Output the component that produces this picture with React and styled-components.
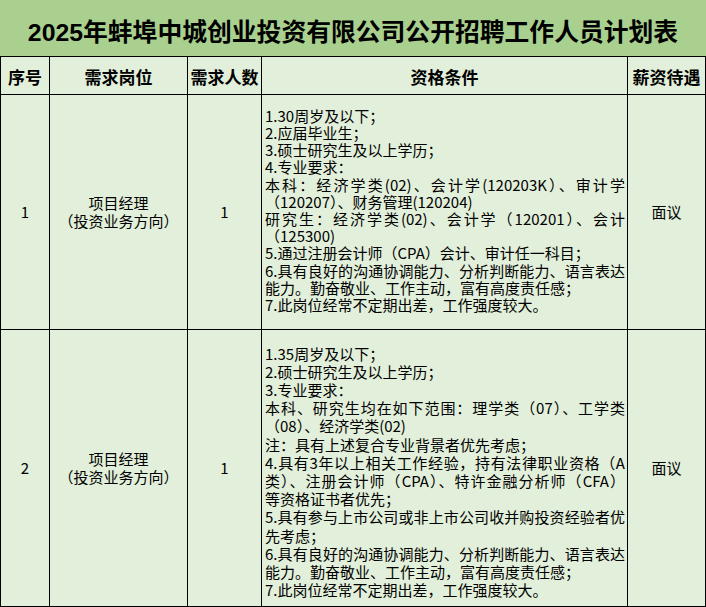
import React from "react";
import styled, { createGlobalStyle } from "styled-components";

const GlobalStyle = createGlobalStyle`
  html, body {
    margin: 0;
    padding: 0;
    background: #ffffff;
  }
  body {
    font-family: "Noto Sans CJK SC", "Liberation Sans", sans-serif;
    color: #000;
  }
`;

const positions = [
  {
    no: "1",
    height: 235,
    lh: 17.2,
    shift: -2,
    lines: [
      { t: "1.30周岁及以下；" },
      { t: "2.应届毕业生；" },
      { t: "3.硕士研究生及以上学历；" },
      { t: "4.专业要求：" },
      { t: "本科：经济学类(02)、会计学(120203K）、审计学", full: true },
      { t: "（120207）、财务管理(120204)" },
      { t: "研究生：经济学类(02)、会计学（120201）、会计", full: true },
      { t: "（125300)" },
      { t: "5.通过注册会计师（CPA）会计、审计任一科目；" },
      { t: "6.具有良好的沟通协调能力、分析判断能力、语言表达", full: true },
      { t: "能力。勤奋敬业、工作主动，富有高度责任感；" },
      { t: "7.此岗位经常不定期出差，工作强度较大。" },
    ],
  },
  {
    no: "2",
    height: 277,
    lh: 18.2,
    shift: 4,
    lines: [
      { t: "1.35周岁及以下；" },
      { t: "2.硕士研究生及以上学历；" },
      { t: "3.专业要求：" },
      { t: "本科、研究生均在如下范围：理学类（07）、工学类", full: true },
      { t: "（08）、经济学类(02)" },
      { t: "注：具有上述复合专业背景者优先考虑；" },
      { t: "4.具有3年以上相关工作经验，持有法律职业资格（A", full: true },
      { t: "类）、注册会计师（CPA）、特许金融分析师（CFA）", full: true },
      { t: "等资格证书者优先；" },
      { t: "5.具有参与上市公司或非上市公司收并购投资经验者优", full: true },
      { t: "先考虑；" },
      { t: "6.具有良好的沟通协调能力、分析判断能力、语言表达", full: true },
      { t: "能力。勤奋敬业、工作主动，富有高度责任感；" },
      { t: "7.此岗位经常不定期出差，工作强度较大。" },
    ],
  },
];

const App = () => {
  return (
    <Page>
      <GlobalStyle />
      <TitleBar>2025年蚌埠中城创业投资有限公司公开招聘工作人员计划表</TitleBar>
      <Sheet>
        <colgroup>
          <col style={{ width: 49 }} />
          <col style={{ width: 138 }} />
          <col style={{ width: 74 }} />
          <col style={{ width: 366 }} />
          <col style={{ width: 78 }} />
        </colgroup>
        <thead>
          <tr>
            <HeadCell>序号</HeadCell>
            <HeadCell>需求岗位</HeadCell>
            <HeadCell>需求人数</HeadCell>
            <HeadCell>资格条件</HeadCell>
            <HeadCell>薪资待遇</HeadCell>
          </tr>
        </thead>
        <tbody>
          {positions.map((p) => (
            <tr key={p.no} style={{ height: p.height }}>
              <Cell>{p.no}</Cell>
              <Cell>
                <CenterLine>项目经理</CenterLine>
                <CenterLine>（投资业务方向）</CenterLine>
              </Cell>
              <Cell>1</Cell>
              <TextCell $shift={p.shift}>
                {p.lines.map((l, k) => (
                  <Line key={k} $full={l.full} $lh={p.lh}>
                    {l.t}
                  </Line>
                ))}
              </TextCell>
              <Cell>面议</Cell>
            </tr>
          ))}
        </tbody>
      </Sheet>
    </Page>
  );
};

const Page = styled.div`
  width: 706px;
  background: #ffffff;
`;

const TitleBar = styled.div`
  height: 56px;
  box-sizing: border-box;
  padding-top: 4px;
  background: #a9d08e;
  display: flex;
  align-items: center;
  justify-content: center;
  font-family: "Liberation Sans", "Noto Sans CJK SC", sans-serif;
  font-weight: 700;
  font-size: 24.8px;
  color: #000;
  white-space: nowrap;
`;

const Sheet = styled.table`
  width: 705px;
  table-layout: fixed;
  border-collapse: collapse;
  background: #e2efda;
`;

const HeadCell = styled.th`
  height: 35px;
  padding: 2px 0 0;
  border: 1px solid #000;
  font-size: 17px;
  font-weight: 700;
  text-align: center;
  vertical-align: middle;
  white-space: nowrap;
`;

const Cell = styled.td`
  padding: 0;
  border: 1px solid #000;
  font-size: 15px;
  line-height: 18px;
  text-align: center;
  vertical-align: middle;
`;

const CenterLine = styled.div`
  white-space: nowrap;
`;

const TextCell = styled.td`
  padding: ${(p) => (p.$shift > 0 ? p.$shift * 2 : 0)}px 2px
    ${(p) => (p.$shift < 0 ? -p.$shift * 2 : 0)}px 3px;
  border: 1px solid #000;
  font-size: 15px;
  vertical-align: middle;
  text-align: left;
`;

const Line = styled.div`
  height: ${(p) => p.$lh}px;
  line-height: ${(p) => p.$lh}px;
  white-space: nowrap;
  text-align: justify;
  text-align-last: ${(p) => (p.$full ? "justify" : "left")};
`;

export default App;
